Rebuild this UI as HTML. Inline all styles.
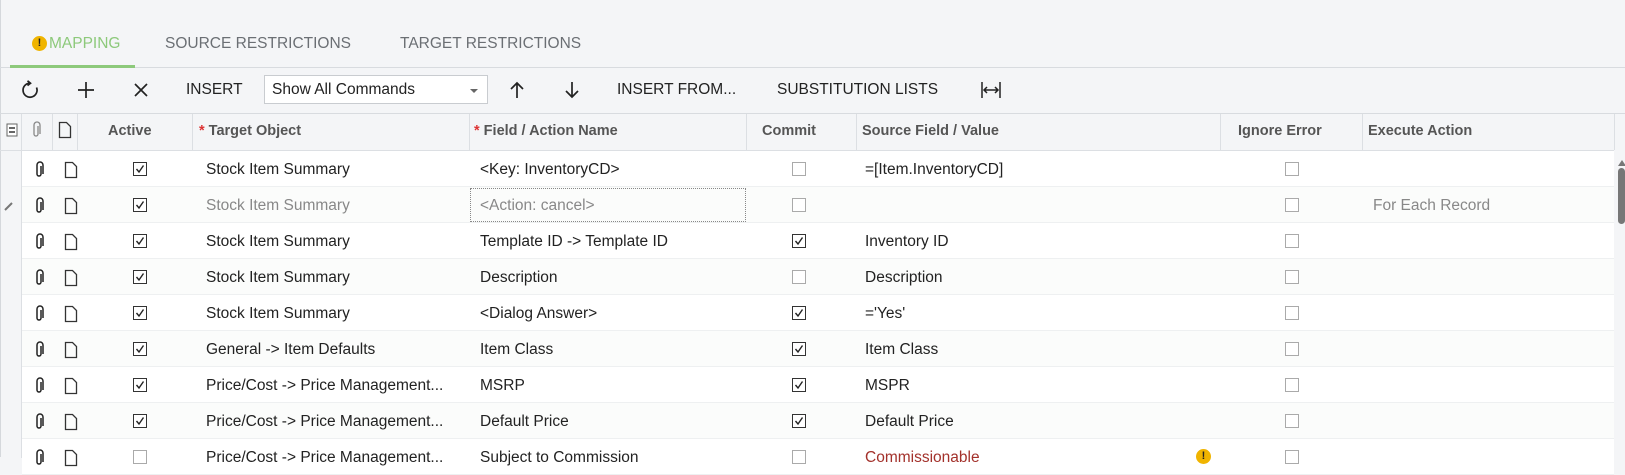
<!DOCTYPE html>
<html><head><meta charset="utf-8">
<style>
*{margin:0;padding:0;box-sizing:border-box}
body{width:1625px;height:457px;overflow:hidden;background:#f4f5f7;font-family:"Liberation Sans",Arial,sans-serif;color:#222;position:relative}
.a{position:absolute;white-space:nowrap}
.tab{font-size:15.5px;color:#6b6f74;top:35px}
.tb{font-size:15.5px;color:#222;top:81px}
.hd{font-size:14.5px;font-weight:bold;color:#555;top:123px}
.cell{font-size:15.5px;color:#222}
.cb{position:absolute;width:14px;height:14px;border:1.3px solid #333;background:#fff}
.cb.off{border-color:#aaa}
.cb svg{position:absolute;left:1px;top:1px}
.vl{position:absolute;width:1px;background:#dcdfe3}
</style></head><body>
<div class="a" style="left:0;top:0;width:1px;height:457px;background:#d5d8dc"></div>
<div class="a" style="left:32px;top:36px;width:15px;height:15px;border-radius:50%;background:#f0b400;color:#222;font-size:11px;font-weight:bold;text-align:center;line-height:15px">!</div>
<div class="a tab" style="left:49px;color:#8dc97b">MAPPING</div>
<div class="a tab" style="left:165px">SOURCE RESTRICTIONS</div>
<div class="a tab" style="left:400px">TARGET RESTRICTIONS</div>
<div class="a" style="left:0;top:67px;width:1625px;height:1px;background:#d8dbdf"></div>
<div class="a" style="left:10px;top:65px;width:125px;height:3px;background:#8dc97b"></div>
<svg class="a" style="left:21px;top:80px" width="20" height="20" viewBox="0 0 20 20"><path d="M15.5 7.5A7 7 0 1 1 9 3.2" fill="none" stroke="#222" stroke-width="1.7"/><path d="M6.5 0.8l3 2.4-3 2.4" fill="none" stroke="#222" stroke-width="1.7"/></svg>
<svg class="a" style="left:77px;top:81px" width="18" height="18"><path d="M9 1v16M1 9h16" stroke="#222" stroke-width="1.7"/></svg>
<svg class="a" style="left:133px;top:82px" width="16" height="16"><path d="M2 2l12 12M14 2L2 14" stroke="#222" stroke-width="1.7"/></svg>
<div class="a tb" style="left:186px">INSERT</div>
<div class="a" style="left:264px;top:75px;width:224px;height:29px;background:#fff;border:1px solid #c9ccd0"></div>
<div class="a tb" style="left:272px">Show All Commands</div>
<div class="a" style="left:470px;top:89px;border-left:4px solid transparent;border-right:4px solid transparent;border-top:4px solid #666"></div>
<svg class="a" style="left:509px;top:81px" width="16" height="18"><path d="M8 17V2M2 8l6-6 6 6" fill="none" stroke="#222" stroke-width="1.7"/></svg>
<svg class="a" style="left:564px;top:81px" width="16" height="18"><path d="M8 1v15M2 10l6 6 6-6" fill="none" stroke="#222" stroke-width="1.7"/></svg>
<div class="a tb" style="left:617px">INSERT FROM...</div>
<div class="a tb" style="left:777px">SUBSTITUTION LISTS</div>
<svg class="a" style="left:980px;top:80px" width="22" height="20"><path d="M2 2v16M20 2v16M4 10h14M7 7l-3 3 3 3M15 7l3 3-3 3" fill="none" stroke="#222" stroke-width="1.5"/></svg>
<div class="a" style="left:0;top:113px;width:1625px;height:1px;background:#d8dbdf"></div>
<div class="a" style="left:0;top:150px;width:1614px;height:1px;background:#dcdfe3"></div>
<div class="vl" style="left:21px;top:114px;height:344px"></div>
<div class="vl" style="left:52px;top:114px;height:36px"></div>
<div class="vl" style="left:77px;top:114px;height:36px"></div>
<div class="vl" style="left:192px;top:114px;height:36px"></div>
<div class="vl" style="left:469px;top:114px;height:36px"></div>
<div class="vl" style="left:746px;top:114px;height:36px"></div>
<div class="vl" style="left:856px;top:114px;height:36px"></div>
<div class="vl" style="left:1220px;top:114px;height:36px"></div>
<div class="vl" style="left:1362px;top:114px;height:36px"></div>
<div class="vl" style="left:1614px;top:114px;height:36px"></div>
<svg class="a" style="left:6px;top:123px" width="12" height="14"><rect x="1" y="1" width="10" height="12" fill="#fff" stroke="#666"/><path d="M3 5h6M3 9h6" stroke="#666" stroke-width="2"/></svg>
<svg class="a" style="left:30px;top:121px" width="12" height="18" viewBox="0 0 12 18"><path d="M8 5v8a2 2 0 0 1-4 0V4a3 3 0 0 1 6 0v9" fill="none" stroke="#888" stroke-width="1.3"/></svg>
<svg class="a" style="left:58px;top:121px" width="14" height="18"><path d="M1.5 1.5h7l4 4v11h-11z" fill="none" stroke="#333" stroke-width="1.3"/></svg>
<div class="a hd" style="left:108px">Active</div>
<div class="a hd" style="left:199px"><span style="color:#d33">*</span> Target Object</div>
<div class="a hd" style="left:474px"><span style="color:#d33">*</span> Field / Action Name</div>
<div class="a hd" style="left:762px">Commit</div>
<div class="a hd" style="left:862px">Source Field / Value</div>
<div class="a hd" style="left:1238px">Ignore Error</div>
<div class="a hd" style="left:1368px">Execute Action</div>
<div id="rows"></div>
<div class="a" style="left:1618px;top:168px;width:7px;height:56px;background:#777;border-radius:4px"></div>
<div class="a" style="left:1618px;top:160px;border-left:4px solid transparent;border-right:4px solid transparent;border-bottom:6px solid #777"></div>
<script>
var R=[
[1,"Stock Item Summary","&lt;Key: InventoryCD&gt;",0,"=[Item.InventoryCD]",""],
[1,"Stock Item Summary","&lt;Action: cancel&gt;",0,"","For Each Record"],
[1,"Stock Item Summary","Template ID -&gt; Template ID",1,"Inventory ID",""],
[1,"Stock Item Summary","Description",0,"Description",""],
[1,"Stock Item Summary","&lt;Dialog Answer&gt;",1,"='Yes'",""],
[1,"General -&gt; Item Defaults","Item Class",1,"Item Class",""],
[1,"Price/Cost -&gt; Price Management...","MSRP",1,"MSPR",""],
[1,"Price/Cost -&gt; Price Management...","Default Price",1,"Default Price",""],
[0,"Price/Cost -&gt; Price Management...","Subject to Commission",0,"Commissionable",""]];
function cb(x,y,on){return '<div class="cb'+(on?'':' off')+'" style="left:'+x+'px;top:'+y+'px">'+(on?'<svg width="10" height="10"><path d="M1.5 5l2.5 3 4.5-6.5" fill="none" stroke="#222" stroke-width="1.4"/></svg>':'')+'</div>';}
var h='';
R.forEach(function(r,i){
 var t=151+i*36, c=t+19, ty=c-9;
 var bg=i%2?'#fbfcfb':'#fff';
 h+='<div class="a" style="left:22px;top:'+t+'px;width:1592px;height:36px;background:'+bg+';border-bottom:1px solid #eef0f1"></div>';
 var g=(i==1)?'#888':'#222';
 h+='<svg class="a" style="left:33px;top:'+(c-9)+'px" width="12" height="18"><path d="M8 5v8a2 2 0 0 1-4 0V4a3 3 0 0 1 6 0v9" fill="none" stroke="#222" stroke-width="1.5"/></svg>';
 h+='<svg class="a" style="left:64px;top:'+(c-9)+'px" width="14" height="18"><path d="M1.5 1.5h7l4 4v11h-11z" fill="none" stroke="#333" stroke-width="1.3"/></svg>';
 h+=cb(133,c-8,r[0]);
 h+='<div class="a cell" style="left:206px;top:'+ty+'px;color:'+g+'">'+r[1]+'</div>';
 if(i==1)h+='<div class="a" style="left:470px;top:'+(t+1)+'px;width:276px;height:34px;border:1px dotted #888"></div>';
 h+='<div class="a cell" style="left:480px;top:'+ty+'px;color:'+g+'">'+r[2]+'</div>';
 h+=cb(792,c-8,r[3]);
 h+='<div class="a cell" style="left:865px;top:'+ty+'px;color:'+(i==8?'#a3312b':'#222')+'">'+r[4]+'</div>';
 h+=cb(1285,c-8,0);
 if(r[5])h+='<div class="a cell" style="left:1373px;top:'+ty+'px;color:#888">'+r[5]+'</div>';
});
h+='<svg class="a" style="left:4px;top:201px" width="10" height="10"><path d="M1 9l7-7" stroke="#777" stroke-width="2"/></svg>';
h+='<div class="a" style="left:1196px;top:449px;width:15px;height:15px;border-radius:50%;background:#f0b400;font-size:11px;font-weight:bold;text-align:center;line-height:15px">!</div>';
document.getElementById('rows').innerHTML=h;
</script>
</body></html>
